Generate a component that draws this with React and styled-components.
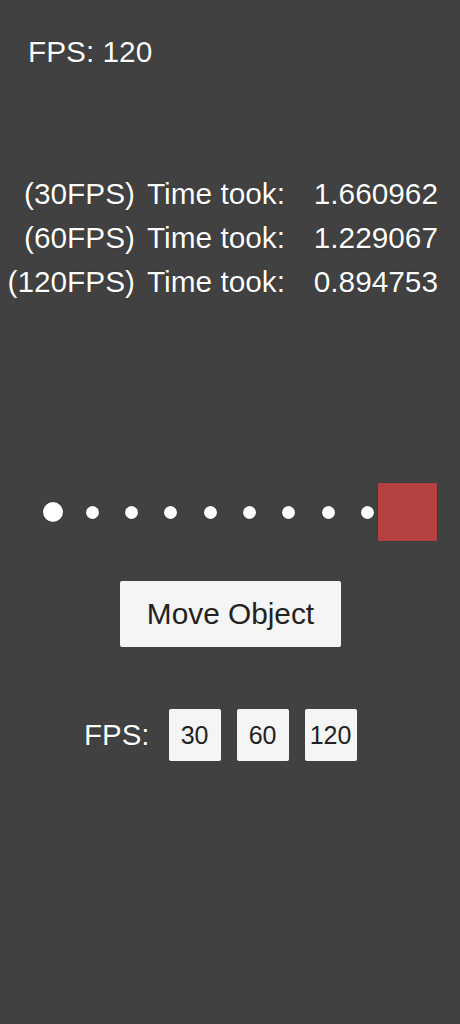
import React from "react";
import styled, { createGlobalStyle } from "styled-components";

const GlobalStyle = createGlobalStyle`
  html, body {
    margin: 0;
    padding: 0;
    background: #414141;
  }
  body {
    font-family: "Liberation Sans", Arial, sans-serif;
  }
`;

const results = [
  { label: "(30FPS)", value: "1.660962" },
  { label: "(60FPS)", value: "1.229067" },
  { label: "(120FPS)", value: "0.894753" },
];

const smallDots = 8;

const App = () => {
  return (
    <>
      <GlobalStyle />
      <Page>
        <Header>FPS: 120</Header>

        <Stats>
          {results.map((r) => (
            <React.Fragment key={r.label}>
              <Label>{r.label}</Label>
              <Caption>Time took:</Caption>
              <Value>{r.value}</Value>
            </React.Fragment>
          ))}
        </Stats>

        <Track>
          <Dot $big />
          {Array.from({ length: smallDots }).map((_, i) => (
            <Dot key={i} $gap={i === 0 ? 22.5 : 26.4} />
          ))}
          <Block />
        </Track>

        <MoveButton>Move Object</MoveButton>

        <FpsRow>
          <FpsLabel>FPS:</FpsLabel>
          <FpsButton>30</FpsButton>
          <FpsButton>60</FpsButton>
          <FpsButton>120</FpsButton>
        </FpsRow>
      </Page>
    </>
  );
};

const Page = styled.div`
  width: 460px;
  min-height: 1024px;
  padding-top: 36px;
  box-sizing: border-box;
  display: flex;
  flex-direction: column;
  color: #ffffff;
  text-shadow: 0 0 1px rgba(0, 0, 0, 0.7);
`;

const Header = styled.div`
  margin-left: 28px;
  font-size: 29.8px;
  line-height: 32px;
  height: 32px;
`;

const Stats = styled.div`
  margin-top: 104px;
  display: grid;
  grid-template-columns: 135px auto 1fr;
  column-gap: 12px;
  padding-right: 22px;
  font-size: 29.8px;
  line-height: 44px;
`;

const Label = styled.div`
  text-align: right;
  white-space: nowrap;
`;

const Caption = styled.div`
  white-space: nowrap;
`;

const Value = styled.div`
  text-align: right;
`;

const Track = styled.div`
  margin-top: 178px;
  height: 60px;
  padding-left: 43px;
  display: flex;
  align-items: center;
`;

const Dot = styled.div`
  flex: none;
  width: ${(p) => (p.$big ? 20 : 13)}px;
  height: ${(p) => (p.$big ? 20 : 13)}px;
  margin-left: ${(p) => p.$gap || 0}px;
  border-radius: 50%;
  background: #ffffff;
  box-shadow: 0 0 1px rgba(0, 0, 0, 0.8);
`;

const Block = styled.div`
  flex: none;
  width: 59px;
  height: 58px;
  margin-left: 3.5px;
  background: #b54141;
  box-shadow: 0 0 1px rgba(0, 0, 0, 0.5);
`;

const MoveButton = styled.button`
  align-self: flex-start;
  margin: 39px 0 0 120px;
  width: 221px;
  height: 66px;
  border: 0;
  border-radius: 2px;
  background: #f5f5f5;
  color: #222222;
  font-family: "Liberation Sans", Arial, sans-serif;
  font-size: 29.8px;
  padding: 0;
  cursor: pointer;
`;

const FpsRow = styled.div`
  margin: 62px 0 0 84px;
  display: flex;
  align-items: center;
  height: 52px;
`;

const FpsLabel = styled.span`
  font-size: 29.5px;
  margin-right: 19px;
`;

const FpsButton = styled.button`
  width: 52px;
  height: 52px;
  margin-right: 16px;
  border: 0;
  border-radius: 2px;
  background: #f5f5f5;
  color: #222222;
  font-family: "Liberation Sans", Arial, sans-serif;
  font-size: 25px;
  padding: 0;
  cursor: pointer;
`;

export default App;
